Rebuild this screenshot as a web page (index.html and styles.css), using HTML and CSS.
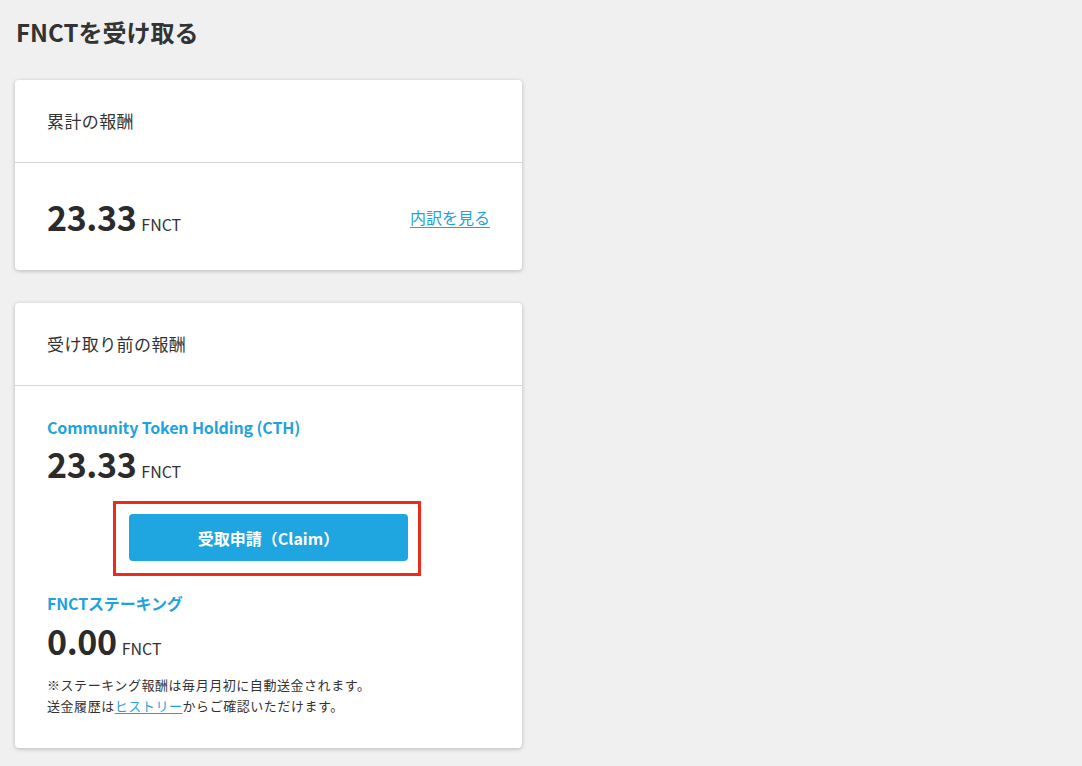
FILE: index.html
```html
<!DOCTYPE html>
<html lang="ja">
<head>
<meta charset="utf-8">
<title>FNCTを受け取る</title>
<link rel="stylesheet" href="styles.css">
</head>
<body>
<main class="page">
  <h1 class="page-title">FNCTを受け取る</h1>

  <section class="card">
    <header class="card-header">累計の報酬</header>
    <div class="card-body">
      <div class="total-row">
        <div class="amount"><span class="amount-value">23.33</span><span class="amount-unit">FNCT</span></div>
        <a class="link" href="#">内訳を見る</a>
      </div>
    </div>
  </section>

  <section class="card">
    <header class="card-header">受け取り前の報酬</header>
    <div class="card-body">
      <div class="section-label section-label-first">Community Token Holding (CTH)</div>
      <div class="amount amount-tight"><span class="amount-value">23.33</span><span class="amount-unit">FNCT</span></div>
      <div class="highlight">
        <button class="claim-button" type="button">受取申請（Claim）</button>
      </div>
      <div class="section-label section-label-gap">FNCTステーキング</div>
      <div class="amount amount-tight2"><span class="amount-value">0.00</span><span class="amount-unit">FNCT</span></div>
      <p class="note">※ステーキング報酬は毎月月初に自動送金されます。<br>送金履歴は<a class="link" href="#">ヒストリー</a>からご確認いただけます。</p>
    </div>
  </section>
</main>
</body>
</html>
```

FILE: styles.css
```css
* {
  box-sizing: border-box;
}

html, body {
  margin: 0;
  padding: 0;
  background: #f0f0f0;
}

body {
  font-family: "Noto Sans CJK JP", "Noto Sans", sans-serif;
  color: #333333;
}

.page {
  padding: 14px 0 20px 15px;
  display: flex;
  flex-direction: column;
  gap: 33px;
  width: 522px;
}

.page-title {
  margin: 0 0 -3px 1px;
  font-size: 24px;
  line-height: 36px;
  font-weight: 700;
  color: #333333;
}

.card {
  width: 507px;
  background: #ffffff;
  border-radius: 4px;
  box-shadow: 0 1px 4px rgba(0, 0, 0, 0.24);
}

.card-header {
  padding: 29px 32px 29px;
  font-size: 17px;
  letter-spacing: 0.4px;
  line-height: 24px;
  border-bottom: 1px solid #d6d6d6;
}

.card-body {
  padding: 32px 32px 32px;
}

.total-row {
  display: flex;
  align-items: center;
  justify-content: space-between;
}

.amount {
  font-size: 34px;
  line-height: 43px;
  height: 43px;
  white-space: nowrap;
}

.amount-value {
  font-weight: 700;
  color: #2b2b2b;
  letter-spacing: -0.4px;
}

.amount-unit {
  font-size: 16px;
  line-height: 1;
  margin-left: 5px;
  color: #333333;
}

.link {
  color: #1fa3dd;
  text-decoration: underline;
  text-underline-offset: 3px;
  font-size: 16px;
  line-height: 24px;
}

.section-label {
  font-size: 16px;
  line-height: 24px;
  font-weight: 700;
  letter-spacing: -0.15px;
  color: #1fa3dd;
}

.section-label-first {
  margin-top: -3px;
}

.section-label-gap {
  margin-top: 15px;
}

.amount-tight {
  margin-top: 3px;
}

.amount-tight2 {
  margin-top: 4px;
}

.highlight {
  width: 308px;
  margin: 16px 0 0 66px;
  padding: 10px 10px 12px 13px;
  border: 3px solid #ee2a1b;
}

.claim-button {
  display: block;
  width: 100%;
  height: 47px;
  border: none;
  border-radius: 4px;
  background: #1fa5e0;
  color: #ffffff;
  font-family: inherit;
  font-size: 16px;
  font-weight: 700;
  cursor: pointer;
}

.note {
  margin: 12px 0 -0.5px;
  font-size: 13px;
  line-height: 21px;
  letter-spacing: 0.55px;
  color: #333333;
}

.note .link {
  font-size: 13px;
  line-height: 21px;
  text-underline-offset: 2px;
}
```
